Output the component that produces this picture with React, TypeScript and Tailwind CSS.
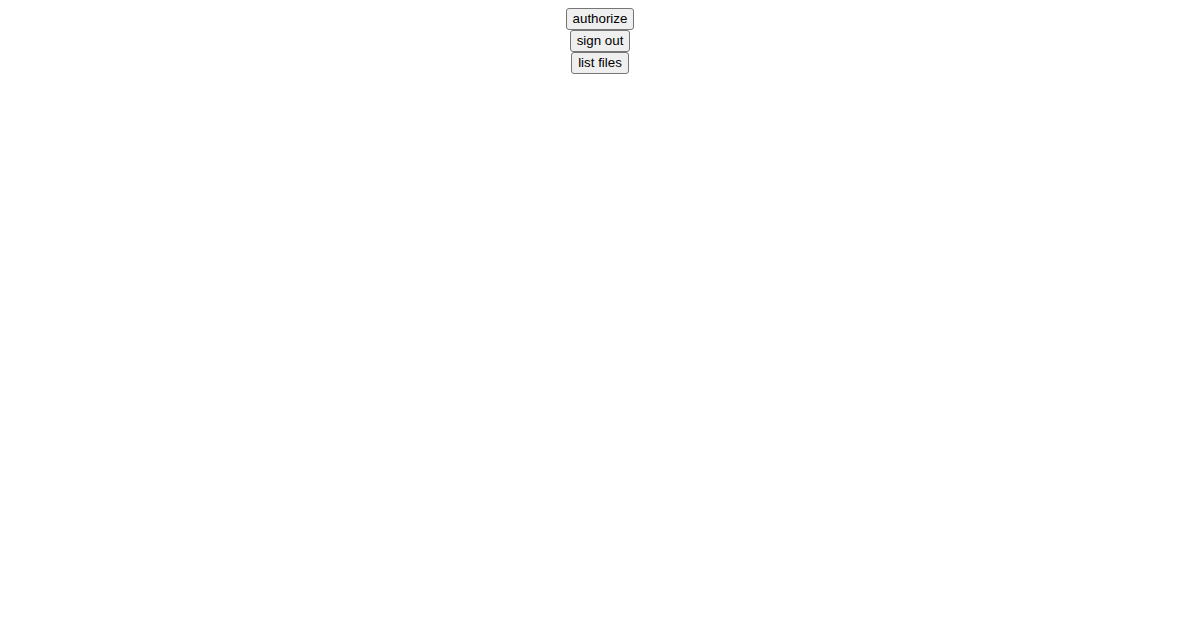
export default function App() {
  const btn =
    "h-[22px] px-[6px] bg-[#efefef] border border-[#767676] rounded-[3px] text-[13.333px] leading-none text-black";
  return (
    <div className="min-h-[630px] bg-white flex flex-col items-center pt-2" style={{ fontFamily: '"Liberation Sans", Arial, sans-serif' }}>
      <button className={btn}>authorize</button>
      <button className={btn}>sign out</button>
      <button className={btn}>list files</button>
    </div>
  );
}
